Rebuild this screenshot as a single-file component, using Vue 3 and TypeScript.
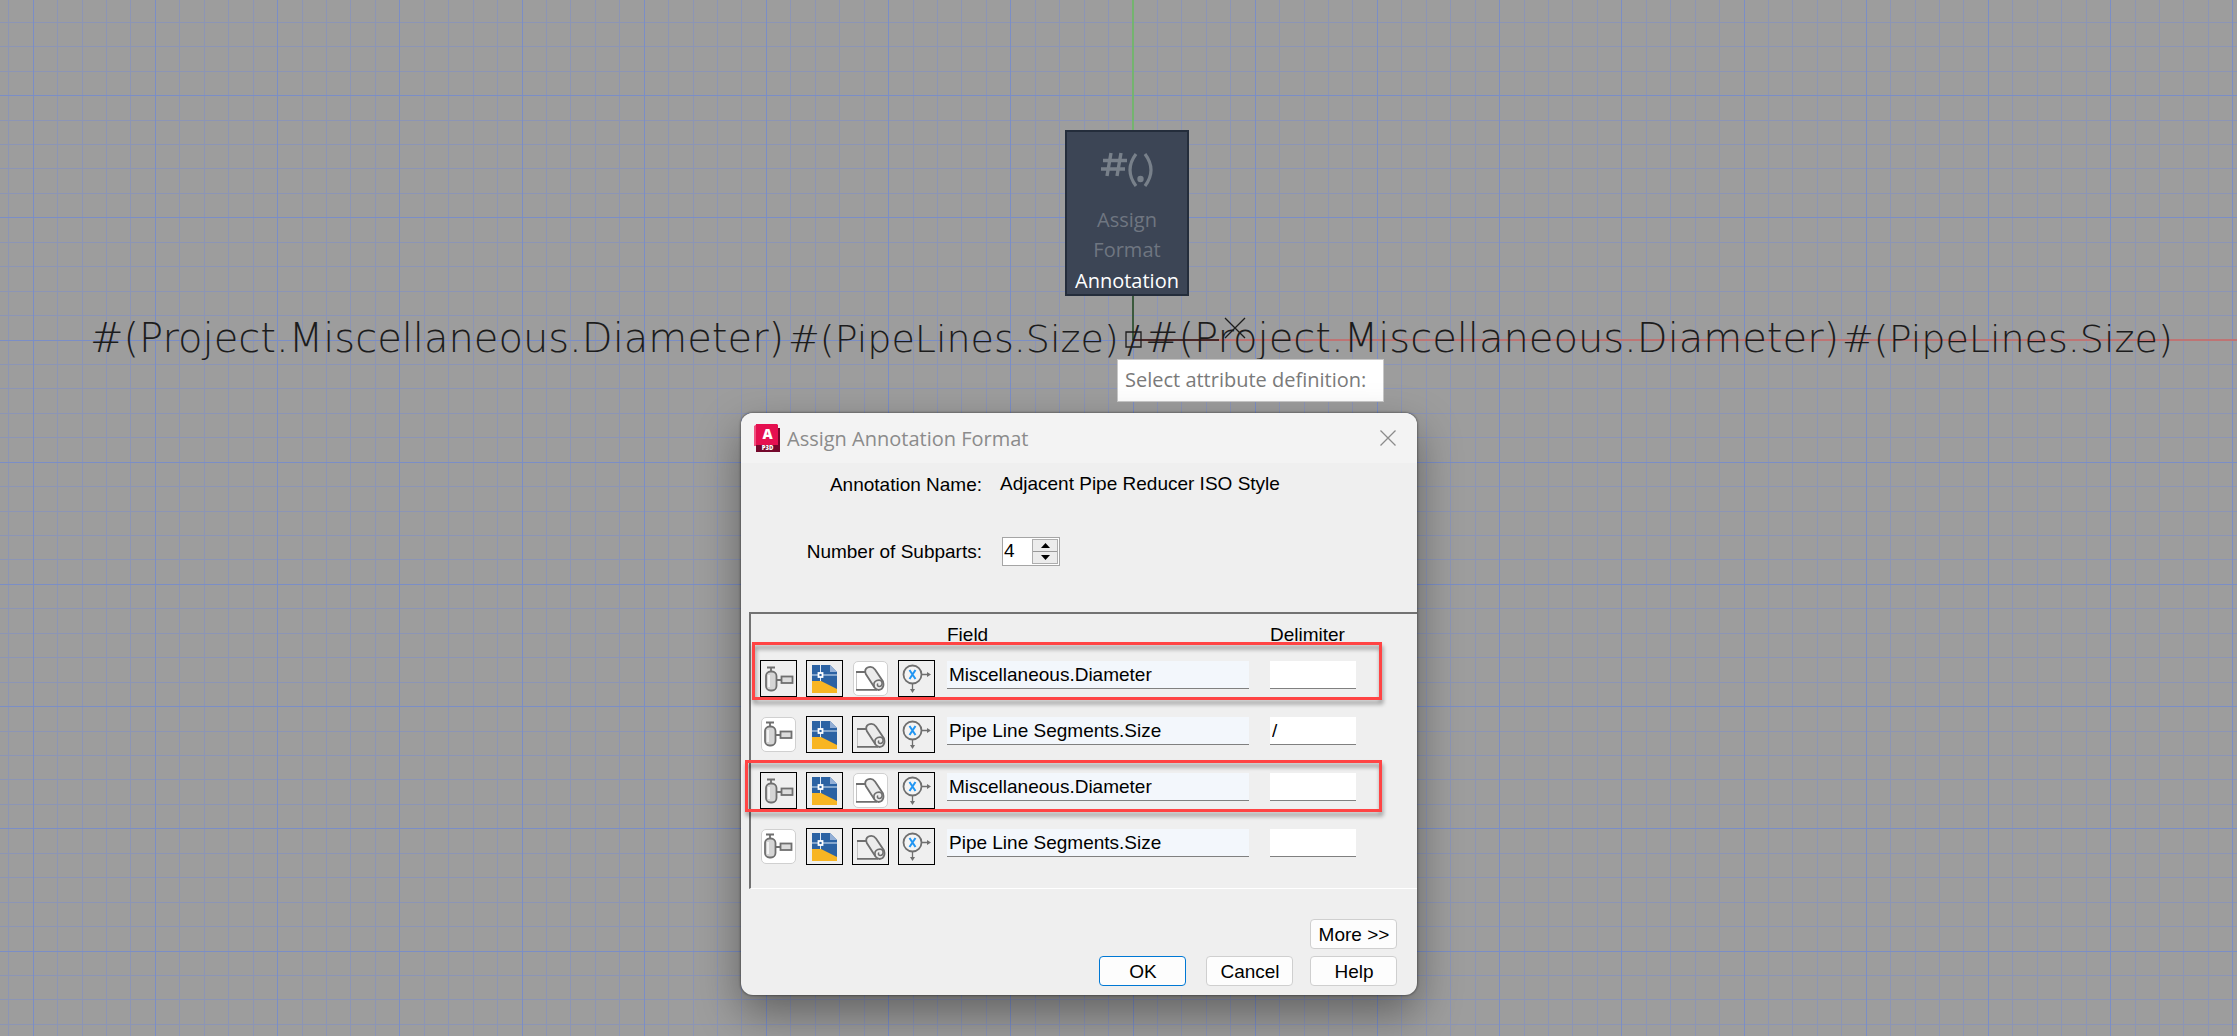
<script setup lang="ts">
import { ref } from 'vue'

interface Subpart {
  field: string
  delimiter: string
  pressed: boolean[]
}

const tools = ['Component', 'Drawing', 'Pipe line', 'Custom']
const subpartCount = ref('4')
const subparts = ref<Subpart[]>([
  { field: 'Miscellaneous.Diameter', delimiter: '', pressed: [true, true, false, true] },
  { field: 'Pipe Line Segments.Size', delimiter: '/', pressed: [false, true, true, true] },
  { field: 'Miscellaneous.Diameter', delimiter: '', pressed: [true, true, false, true] },
  { field: 'Pipe Line Segments.Size', delimiter: '', pressed: [false, true, true, true] },
])

// Grid lines measured from the drawing origin, five minor cells to a major one
const cell = 122.2 / 5
const origin = { x: 1133, y: 340 }
const lines = Array.from({ length: 221 }, (_, i) => i - 60)
const minor = lines.filter((n) => n % 5 !== 0)
const major = lines.filter((n) => n % 5 === 0)
const at = (start: number, n: number) => Math.floor(start + n * cell) + 0.5
</script>

<template>
  <main class="canvas">
    <svg class="grid" aria-hidden="true">
      <g class="minor">
        <template v-for="n in minor" :key="n">
          <line :x1="at(origin.x, n)" :x2="at(origin.x, n)" y1="0" y2="100%" />
          <line :y1="at(origin.y, n)" :y2="at(origin.y, n)" x1="0" x2="100%" />
        </template>
      </g>
      <g class="major">
        <template v-for="n in major" :key="n">
          <line :x1="at(origin.x, n)" :x2="at(origin.x, n)" y1="0" y2="100%" />
          <line :y1="at(origin.y, n)" :y2="at(origin.y, n)" x1="0" x2="100%" />
        </template>
      </g>
      <line x1="1133" x2="1133" y1="0" y2="340" stroke="#74b46f" stroke-width="2" />
      <line x1="1133" x2="100%" y1="340" y2="340" stroke="#bf7474" stroke-width="2" />
      <line x1="1133" x2="1133" y1="290" y2="340" stroke="#3b5a3d" stroke-width="2" />
      <line x1="1133" x2="1219" y1="340" y2="340" stroke="#4a2626" stroke-width="2" />
      <path d="M1126 332h15v15h-15zM1225 318l20 20M1245 318l-20 20" fill="none" stroke="#1c1c1c" stroke-width="1.3" />
    </svg>

    <span class="attribute wide a1">#(Project.Miscellaneous.Diameter)</span>
    <span class="attribute a2">#(PipeLines.Size)</span>
    <span class="attribute a3">/</span>
    <span class="attribute wide a4">#(Project.Miscellaneous.Diameter)</span>
    <span class="attribute a5">#(PipeLines.Size)</span>

    <section class="ribbon">
      <button type="button" class="assign" disabled>
        <svg width="52" height="36" viewBox="0 0 52 36" fill="none" stroke="#78808a" aria-hidden="true">
          <path d="M10 1 6 24M20 1 16 24M2 8.500h24M0 17h24" stroke-width="3.4" />
          <path d="M35 2q-12 16 0 32M44 2q12 16 0 32" stroke-width="3.2" />
          <circle cx="39.500" cy="27" r="3.2" fill="#78808a" stroke="none" />
        </svg>
        <span>Assign<br />Format</span>
      </button>
      <p>Annotation</p>
    </section>

    <p class="prompt">Select attribute definition:</p>

    <section class="dialog" role="dialog" aria-labelledby="title">
      <header>
        <svg width="26" height="28" viewBox="0 0 26 28" aria-hidden="true">
          <path d="M0 2 3 0v22H0z" fill="#f0527f" />
          <path d="M2 0h21l1 1v20H2z" fill="#e51050" />
          <path d="M24 4h2v24H2v-7h22z" fill="#74082c" />
          <text x="13.5" y="15" class="logo-a">A</text>
          <text x="13.5" y="26" class="logo-p">P3D</text>
        </svg>
        <h1 id="title">Assign Annotation Format</h1>
        <button type="button" class="close" aria-label="Close">
          <svg width="16" height="16" viewBox="0 0 16 16"><path d="M0.5 0.5l15 15M15.5 0.5l-15 15" stroke="#8b8b8b" stroke-width="1.3" /></svg>
        </button>
      </header>

      <form @submit.prevent>
        <div class="row">
          <span class="label">Annotation Name:</span>
          <output>Adjacent Pipe Reducer ISO Style</output>
        </div>
        <div class="row second">
          <label class="label" for="count">Number of Subparts:</label>
          <div class="spinner">
            <input id="count" v-model="subpartCount" type="text" />
            <div class="steps">
              <button type="button" aria-label="Increase"><svg width="9" height="5" viewBox="0 0 9 5"><path d="M0 5 4.500 0 9 5z" /></svg></button>
              <button type="button" aria-label="Decrease"><svg width="9" height="5" viewBox="0 0 9 5"><path d="M0 0 4.500 5 9 0z" /></svg></button>
            </div>
          </div>
        </div>

        <div class="panel">
          <table>
            <thead>
              <tr>
                <td class="tools-col"></td>
                <th id="field" class="field-col">Field</th>
                <th id="delimiter">Delimiter</th>
              </tr>
            </thead>
            <tbody>
              <tr v-for="(part, r) in subparts" :key="r">
                <td>
                  <div class="tools">
                    <button v-for="(tool, t) in tools" :key="tool" type="button" class="tool" :class="{ pressed: part.pressed[t] }" :aria-label="tool" :aria-pressed="part.pressed[t]">
                      <svg width="35" height="35" :viewBox="part.pressed[t] ? '1 1 35 35' : '2 2 35 35'" fill="none" stroke="#6f6f6f" stroke-width="1.8">
                        <template v-if="t === 0">
                          <path d="M7 7.500h8M11 7.500v4M16.500 20H21" />
                          <rect x="6" y="11.500" width="10.500" height="19" rx="4.500" fill="#d5d5d5" />
                          <path d="M9 15v12" stroke="#f4f4f4" stroke-width="2" />
                          <rect x="21.500" y="16.500" width="11" height="6.500" fill="#dcdcdc" />
                        </template>
                        <g v-else-if="t === 1" stroke="none">
                          <path d="M6 5h18l7 7v21H6z" fill="#2b62a3" />
                          <path d="M24 5v7h7z" fill="#93afd6" />
                          <path d="M6 21h9l16 8v4H6z" fill="#f8b523" />
                          <path d="M14.500 5v16M6 15h25" stroke="#dce8f6" stroke-width="1" />
                          <rect x="12.500" y="13" width="4" height="4" fill="#2b62a3" stroke="#fff" />
                        </g>
                        <template v-else-if="t === 2">
                          <path d="M5.500 13v17" stroke="#c4c4c4" stroke-width="1" />
                          <path d="M5 13h10M5 30.800h21" />
                          <path d="M23.500 28.500 14.800 15Q13 10.500 16.500 8.500 21 6.500 24 10.500L32 22.500Q33.500 27.500 30.500 30 26.500 32.500 23.500 28.500z" fill="#ececec" />
                          <path d="M23.300 28q-1.500-5 2.500-6.500 5-1.300 5.300 2.500 0 3.500-3 3.500-2.500-.5-1.300-3" stroke-width="1.6" />
                        </template>
                        <template v-else>
                          <circle cx="14.500" cy="14.500" r="9" fill="#f4f4f4" />
                          <path d="M11.500 10 17.500 19M17.500 10 11.500 19" stroke="#2196f3" stroke-width="2" />
                          <path d="M23.500 14.500H30M14.500 23.500V30" stroke-width="1.3" />
                          <path d="M29 12l4 2.500-4 2.500zM12 29l2.500 4 2.500-4z" fill="#6f6f6f" stroke="none" />
                        </template>
                      </svg>
                    </button>
                  </div>
                </td>
                <td><input v-model="part.field" class="field" type="text" aria-labelledby="field" readonly /></td>
                <td><input v-model="part.delimiter" class="delimiter" type="text" aria-labelledby="delimiter" /></td>
              </tr>
            </tbody>
          </table>
          <i class="mark first"></i>
          <i class="mark third"></i>
        </div>

        <div class="actions">
          <button type="button">More &gt;&gt;</button>
        </div>
        <div class="actions last">
          <button type="submit" class="primary">OK</button>
          <button type="button" class="cancel">Cancel</button>
          <button type="button">Help</button>
        </div>
      </form>
    </section>
  </main>
</template>

<style>
body {
  margin: 0;
  background: #9d9d9d;
}
</style>

<style scoped>
* {
  box-sizing: border-box;
}
.canvas {
  position: relative;
  min-height: 100vh;
  overflow: hidden;
  background: #9d9d9d;
  color: #000;
  font: 19px/24px "Liberation Sans", Arial, sans-serif;
}
button,
input {
  font: inherit;
  color: inherit;
  padding: 0;
  margin: 0;
}
p,
h1 {
  margin: 0;
}
.grid {
  position: absolute;
  inset: 0;
  width: 100%;
  height: 100%;
}
.minor {
  stroke: #8c95b5;
}
.major {
  stroke: #7b8ec6;
}
.attribute {
  position: absolute;
  top: 316px;
  font: 200 38px/46px "DejaVu Sans Light", "DejaVu Sans", sans-serif;
  color: #1c1c1c;
  white-space: nowrap;
}
.wide {
  font-size: 40px;
  line-height: 44px;
}
.a1 { left: 90px; }
.a2 { left: 788px; }
.a3 { left: 1127px; }
.a4 { left: 1145px; }
.a5 { left: 1842px; }

.ribbon {
  position: absolute;
  left: 1065px;
  top: 130px;
  width: 124px;
  height: 166px;
  display: flex;
  flex-direction: column;
  align-items: center;
  border: 2px solid #242d3b;
  background: #3c4555;
  color: #fff;
  font: 20px/30px "Open Sans", "Noto Sans", sans-serif;
}
.ribbon p {
  line-height: 26px;
}
.assign {
  flex: 1;
  width: 100%;
  display: flex;
  flex-direction: column;
  align-items: center;
  gap: 17px;
  padding-top: 20px;
  border: 0;
  background: none;
  color: #6f7681;
}
.prompt {
  position: absolute;
  left: 1117px;
  top: 359px;
  width: 267px;
  padding: 5px 7px 6px;
  border: 1px solid #c8c8c8;
  background: #fff;
  color: #7a7a7a;
  font: 20px/30px "Open Sans", "Noto Sans", sans-serif;
  white-space: nowrap;
}

.dialog {
  position: absolute;
  left: 741px;
  top: 413px;
  width: 676px;
  border-radius: 12px;
  background: #efefef;
  box-shadow: 0 0 2px 1px rgba(0, 0, 0, 0.3), 0 18px 44px rgba(0, 0, 0, 0.38);
}
header {
  display: flex;
  align-items: center;
  height: 50px;
  padding: 0 21px 0 13px;
  border-radius: 12px 12px 0 0;
  background: #f3f3f3;
}
h1 {
  flex: 1;
  padding: 2px 0 0 7px;
  color: #8b8b8b;
  font: 400 20px/30px "Open Sans", "Noto Sans", sans-serif;
}
.logo-a,
.logo-p {
  fill: #fff;
  text-anchor: middle;
  font: 800 14px "Open Sans", sans-serif;
}
.logo-p {
  font-size: 6px;
}
.close {
  display: flex;
  border: 0;
  background: none;
}
.row {
  display: grid;
  grid-template-columns: 241px 1fr;
  gap: 18px;
  align-items: center;
  height: 42px;
}
.second {
  margin-top: 25px;
}
.label {
  padding-top: 2px;
  text-align: right;
}
.spinner {
  display: flex;
  align-items: center;
  width: 58px;
  height: 29px;
  margin-left: 2px;
  padding-right: 1px;
  border: 1px solid #a5a5a5;
  background: #fff;
}
.spinner input {
  width: 29px;
  padding-left: 1px;
  border: 0;
  background: none;
}
.steps {
  flex: 1;
  display: flex;
  flex-direction: column;
  border: 1px solid #adadad;
}
.steps button {
  display: flex;
  align-items: center;
  justify-content: center;
  height: 11px;
  border: 0;
  background: #ececec;
}
.steps button + button {
  height: 12px;
  border-top: 1px solid #999;
}
.panel {
  position: relative;
  height: 277px;
  margin: 40px 0 0 8px;
  border-top: 2px solid #727272;
  border-left: 2px solid #727272;
  border-bottom: 1px solid #fff;
}
table {
  width: 100%;
  table-layout: fixed;
  border-collapse: collapse;
}
th,
td {
  padding: 0;
  vertical-align: top;
  text-align: left;
  font-weight: 400;
}
thead tr {
  height: 46px;
}
th {
  padding-top: 9px;
}
tbody tr {
  height: 56px;
}
.tools-col {
  width: 196px;
}
.field-col {
  width: 323px;
}
.tools {
  display: flex;
  gap: 9px;
  padding-left: 9px;
}
.tool {
  display: flex;
  align-items: center;
  justify-content: center;
  width: 35px;
  height: 35px;
  margin: 1px;
  border: 1px solid #d0d0d0;
  border-radius: 5px;
  background: #fff;
}
.tool svg {
  flex: none;
}
.tool.pressed {
  width: 37px;
  height: 37px;
  margin: 0;
  border-color: #000;
  border-radius: 0;
  background: #efefef;
}
.field,
.delimiter {
  display: block;
  height: 28px;
  margin-top: 1px;
  padding: 0 2px;
  border: 0;
  border-bottom: 1px solid #808080;
}
.field {
  width: 302px;
  background: #f3f7fc;
}
.delimiter {
  width: 86px;
  background: #fff;
}
.mark {
  position: absolute;
  right: 35px;
  border: 3px solid #ff4444;
  filter: drop-shadow(1px 4px 2px rgba(0, 0, 0, 0.4));
  pointer-events: none;
}
.first {
  left: 1px;
  top: 28px;
  height: 58px;
}
.third {
  left: -6px;
  top: 146px;
  height: 52px;
}
.actions {
  display: flex;
  justify-content: flex-end;
  padding: 30px 20px 0 0;
}
.last {
  padding: 7px 20px 9px 0;
}
.actions button {
  width: 87px;
  height: 30px;
  padding: 2px 0 0 1px;
  border: 1px solid #cfcfcf;
  border-radius: 4px;
  background: #fdfdfd;
}
.actions .primary {
  margin-right: 20px;
  border-color: #0078d4;
}
.actions .cancel {
  margin-right: 17px;
}
</style>
